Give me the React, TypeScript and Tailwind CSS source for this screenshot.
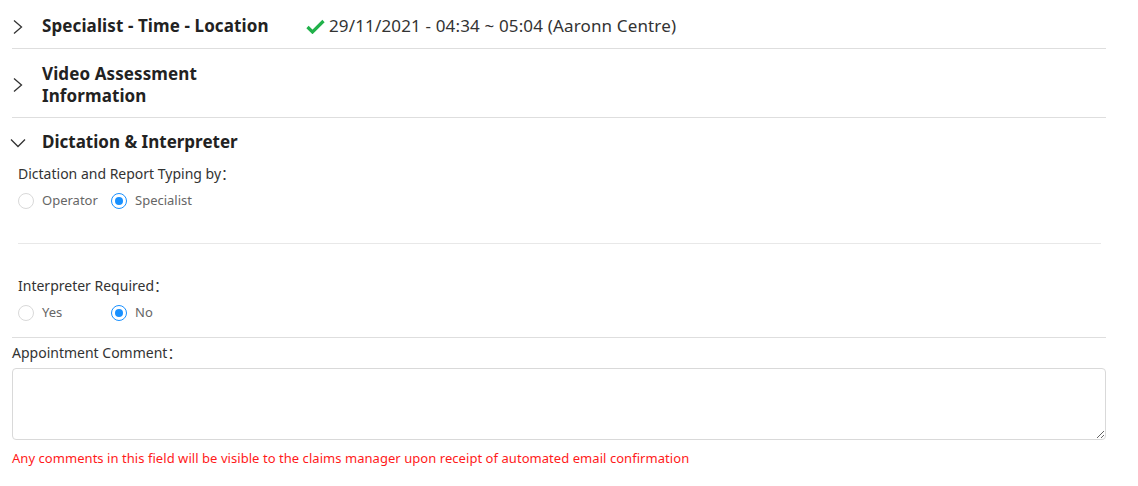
import React from 'react';

const font = { fontFamily: '"Segoe UI", "Noto Sans", "Noto Sans CJK SC", sans-serif' };

const ChevronRight = () => (
  <svg width="12" height="16" viewBox="0 0 12 16" className="shrink-0">
    <polyline points="2,1.5 9.5,8 2,14.5" fill="none" stroke="#333" strokeWidth="1.3" />
  </svg>
);

const ChevronDown = () => (
  <svg width="16" height="10" viewBox="0 0 16 10" className="shrink-0">
    <polyline points="1,1.5 8,8.5 15,1.5" fill="none" stroke="#333" strokeWidth="1.3" />
  </svg>
);

const Check = () => (
  <svg width="19" height="15" viewBox="0 0 19 15" className="shrink-0">
    <polyline points="1.5,8 6.5,13 17.5,2" fill="none" stroke="#21b14a" strokeWidth="3.2" />
  </svg>
);

const Radio = ({ label, checked, w }: { label: string; checked?: boolean; w: string }) => (
  <label className={`flex items-center gap-2 ${w}`}>
    <span
      className={`w-4 h-4 rounded-full border flex items-center justify-center bg-white ${
        checked ? 'border-[#1890ff]' : 'border-[#d9d9d9]'
      }`}
    >
      {checked && <span className="w-2 h-2 rounded-full bg-[#1890ff]" />}
    </span>
    <span className="text-[13px] text-[#666]">{label}</span>
  </label>
);

export default function App() {
  return (
    <div className="min-h-screen bg-white pl-3 pr-8 text-[#333]" style={font}>
      {/* Specialist - Time - Location */}
      <div className="flex items-center pt-[15px] pb-[11px] border-b border-[#dedede]">
        <div className="w-[30px] flex items-center pt-px">
          <ChevronRight />
        </div>
        <div className="w-[264px] text-[17px] leading-[22px] font-bold text-[#222] tracking-[0.1px]">
          Specialist - Time - Location
        </div>
        <div className="flex items-center gap-1 text-[17px] leading-[22px] text-[#333] tracking-[0.15px]">
          <Check />
          <span>29/11/2021 - 04:34 ~ 05:04 (Aaronn Centre)</span>
        </div>
      </div>

      {/* Video Assessment Information */}
      <div className="flex items-center pt-[14px] pb-[10px] border-b border-[#dedede]">
        <div className="w-[30px] flex items-center">
          <ChevronRight />
        </div>
        <div className="w-[200px] text-[17px] leading-[22px] font-bold text-[#222] tracking-[0.1px]">
          Video Assessment Information
        </div>
      </div>

      {/* Dictation & Interpreter */}
      <div className="flex items-center pt-[13px]">
        <div className="w-[30px] -ml-0.5 flex items-center pt-0.5">
          <ChevronDown />
        </div>
        <div className="ml-0.5 text-[17px] leading-[22px] font-bold text-[#222]">Dictation &amp; Interpreter</div>
      </div>

      <div className="pl-1.5 pr-[5px]">
        <div className="pt-2.5 text-[14px] leading-[22px] text-[#333]">Dictation and Report Typing by：</div>
        <div className="flex items-center h-[22px] mt-[5px]">
          <Radio label="Operator" w="w-[93px]" />
          <Radio label="Specialist" checked w="" />
        </div>
        <div className="mt-[31px] border-b border-[#e8e8e8]" />
        <div className="pt-[31px] text-[14px] leading-[22px] text-[#333]">Interpreter Required：</div>
        <div className="flex items-center h-[22px] mt-[5px]">
          <Radio label="Yes" w="w-[93px]" />
          <Radio label="No" checked w="" />
        </div>
      </div>
      <div className="mt-[13px] border-b border-[#dedede]" />

      <div className="pt-1 text-[14px] leading-[22px] text-[#333]">Appointment Comment：</div>
      <textarea className="block mt-1 w-full h-[72px] border border-[#d9d9d9] rounded outline-none resize-y" />
      <div className="mt-2 text-[13px] leading-[20px] text-[#ff1a1a] tracking-[0.05px]">
        Any comments in this field will be visible to the claims manager upon receipt of automated email confirmation
      </div>
    </div>
  );
}
